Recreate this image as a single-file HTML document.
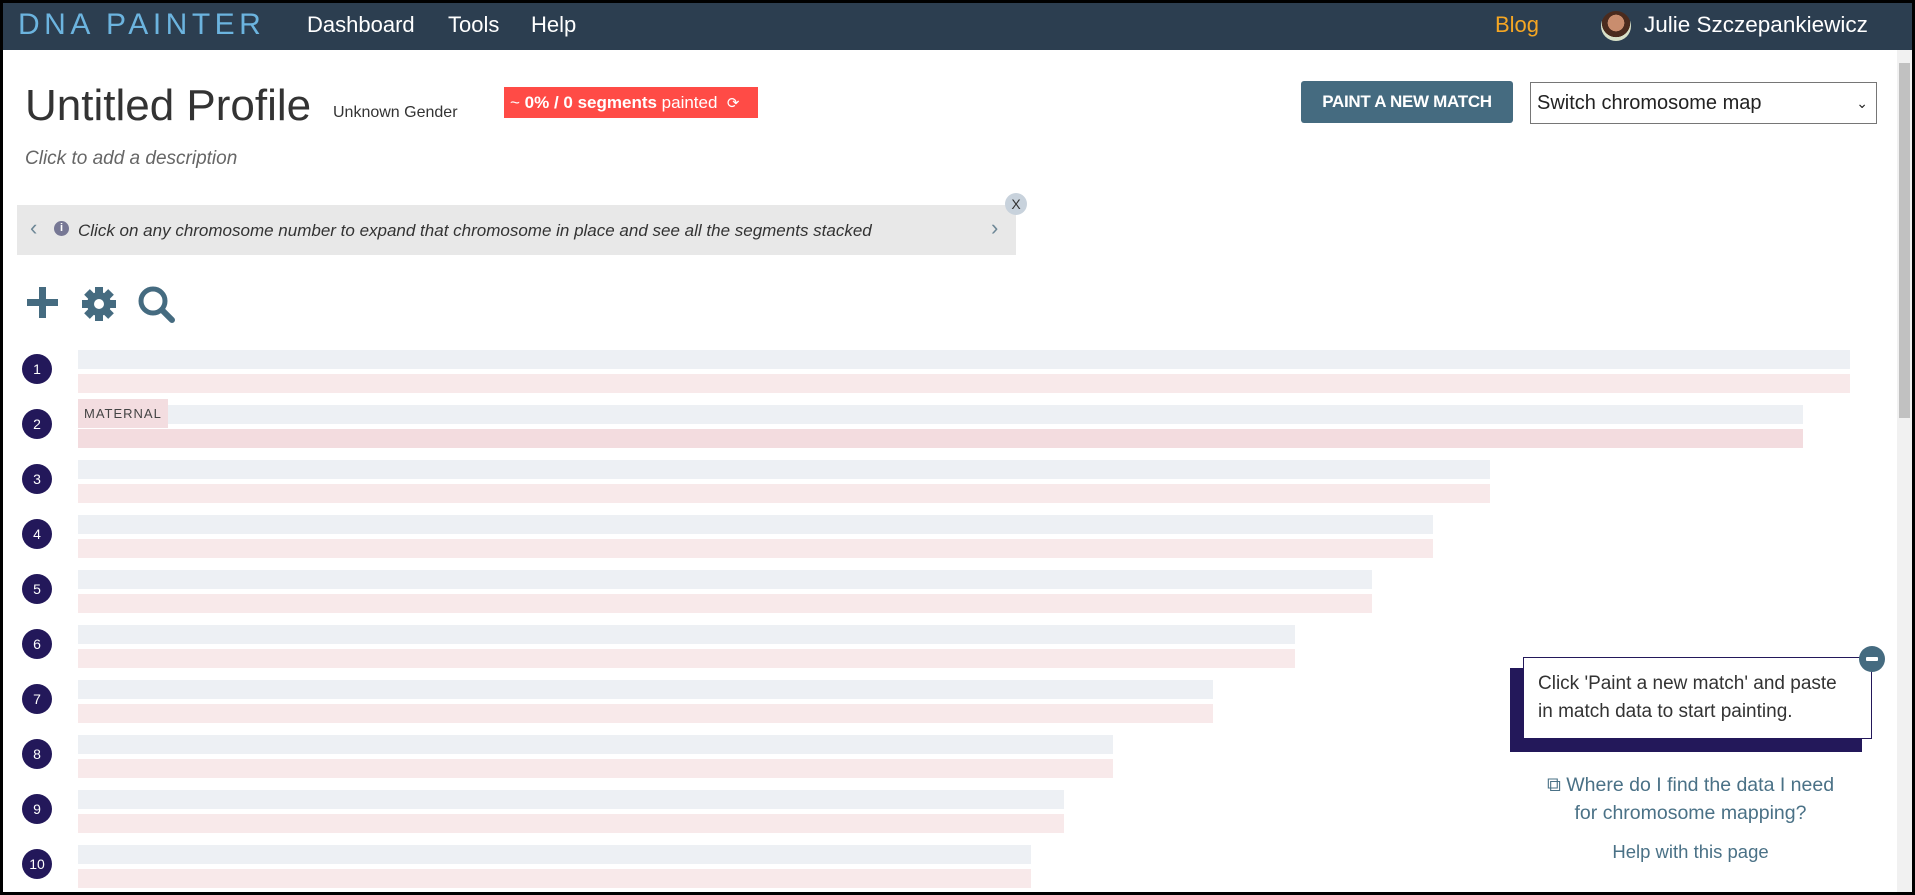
<!DOCTYPE html>
<html><head><meta charset="utf-8"><style>
*{box-sizing:border-box;margin:0;padding:0}
html,body{width:1915px;height:895px;overflow:hidden;background:#000;font-family:"Liberation Sans",Arial,sans-serif}
#page{position:absolute;left:3px;top:3px;width:1909px;height:889px;background:#fff;overflow:hidden}
.abs{position:absolute}
nav{position:absolute;left:0;top:0;width:1909px;height:47px;background:#2c3e50}
.logo{left:15px;top:5px;font-size:30px;color:#6cb4df;letter-spacing:4.5px;font-weight:300}
.nl{top:9px;font-size:22px;color:#fff}
.bar{position:absolute;left:75px;height:19px}
.g{background:#edf0f4}
.p{background:#f8e9ea}
.c{position:absolute;left:19px;width:30px;height:30px;border-radius:50%;background:#23185a;color:#fff;font-size:14px;text-align:center;line-height:30px}
.lk{color:#4a7186;font-size:19px;text-align:center}
</style></head><body><div id="page">
<nav>
<div class="abs logo">DNA PAINTER</div>
<div class="abs nl" style="left:304px">Dashboard</div>
<div class="abs nl" style="left:445px">Tools</div>
<div class="abs nl" style="left:528px">Help</div>
<div class="abs nl" style="left:1492px;color:#f5a623">Blog</div>
<div class="abs" style="left:1598px;top:8px;width:30px;height:30px;border-radius:50%;background:radial-gradient(circle at 50% 40%,#c98d6e 0 35%,#4a2b1e 36% 60%,#d8e0c8 61%)"></div>
<div class="abs nl" style="left:1641px;font-size:22.5px">Julie Szczepankiewicz</div>
</nav>
<div class="abs" style="left:22px;top:78px;font-size:44px;color:#333">Untitled Profile</div>
<div class="abs" style="left:330px;top:101px;font-size:16px;color:#333">Unknown Gender</div>
<div class="abs" style="left:501px;top:84px;width:254px;height:31px;background:#ff4b46;color:#fff;font-size:17px;line-height:31px;padding-left:6px">~ <b>0% / 0 segments</b> painted &nbsp;<span style="font-size:15px">⟳</span></div>
<div class="abs" style="left:22px;top:145px;font-size:19px;color:#666;font-style:italic">Click to add a description</div>
<div class="abs" style="left:1298px;top:78px;width:212px;height:42px;background:#456b80;border-radius:3px;color:#fff;font-weight:bold;font-size:17px;text-align:center;line-height:42px;letter-spacing:-0.3px">PAINT A NEW MATCH</div>
<div class="abs" style="left:1527px;top:79px;width:347px;height:42px;border:1px solid #767676;font-size:20px;line-height:40px;padding-left:6px;color:#222">Switch chromosome map<span style="position:absolute;right:8px;top:0;font-size:14px">&#8964;</span></div>
<div class="abs" style="left:14px;top:202px;width:999px;height:50px;background:#e8e8e8"></div>
<div class="abs" style="left:27px;top:212px;font-size:22px;color:#6d8796">&#8249;</div>
<div class="abs" style="left:51px;top:218px;width:15px;height:15px;border-radius:50%;background:#777895;color:#fff;font-size:11px;text-align:center;line-height:15px;font-weight:bold">i</div>
<div class="abs" style="left:75px;top:218px;font-size:17px;color:#333;font-style:italic">Click on any chromosome number to expand that chromosome in place and see all the segments stacked</div>
<div class="abs" style="left:988px;top:212px;font-size:22px;color:#6d8796">&#8250;</div>
<div class="abs" style="left:1002px;top:190px;width:22px;height:22px;border-radius:50%;background:#c8d2dc;color:#333;font-size:14px;text-align:center;line-height:22px">X</div>
<svg class="abs" style="left:20px;top:280px" width="160" height="45" viewBox="0 0 160 45">
<path d="M16 4h7v12h12v7H23v12h-7V23H4v-7h12z" fill="#456b80"/>
<g transform="translate(76,21)" fill="#456b80"><circle r="12"/><g><rect x="-4" y="-17" width="8" height="34"/><rect x="-4" y="-17" width="8" height="34" transform="rotate(45)"/><rect x="-4" y="-17" width="8" height="34" transform="rotate(90)"/><rect x="-4" y="-17" width="8" height="34" transform="rotate(135)"/></g><circle r="5" fill="#fff"/></g>
<circle cx="130" cy="18" r="12" fill="none" stroke="#456b80" stroke-width="5"/><path d="M139 27l10 10" stroke="#456b80" stroke-width="6" stroke-linecap="round"/>
</svg>
<div class="c" style="top:351px">1</div>
<div class="bar g" style="top:347px;width:1772px"></div><div class="bar p" style="top:371px;width:1772px"></div>
<div class="c" style="top:406px">2</div>
<div class="bar g" style="top:402px;width:1725px"></div><div class="bar p" style="top:426px;width:1725px;background:#f3dcdf"></div>
<div class="abs" style="left:75px;top:396px;width:90px;height:29px;background:#f3dde0;color:#444;font-size:13px;line-height:29px;padding-left:6px;letter-spacing:1px">MATERNAL</div>
<div class="c" style="top:461px">3</div>
<div class="bar g" style="top:457px;width:1412px"></div><div class="bar p" style="top:481px;width:1412px"></div>
<div class="c" style="top:516px">4</div>
<div class="bar g" style="top:512px;width:1355px"></div><div class="bar p" style="top:536px;width:1355px"></div>
<div class="c" style="top:571px">5</div>
<div class="bar g" style="top:567px;width:1294px"></div><div class="bar p" style="top:591px;width:1294px"></div>
<div class="c" style="top:626px">6</div>
<div class="bar g" style="top:622px;width:1217px"></div><div class="bar p" style="top:646px;width:1217px"></div>
<div class="c" style="top:681px">7</div>
<div class="bar g" style="top:677px;width:1135px"></div><div class="bar p" style="top:701px;width:1135px"></div>
<div class="c" style="top:736px">8</div>
<div class="bar g" style="top:732px;width:1035px"></div><div class="bar p" style="top:756px;width:1035px"></div>
<div class="c" style="top:791px">9</div>
<div class="bar g" style="top:787px;width:986px"></div><div class="bar p" style="top:811px;width:986px"></div>
<div class="c" style="top:846px">10</div>
<div class="bar g" style="top:842px;width:953px"></div><div class="bar p" style="top:866px;width:953px"></div>
<div class="abs" style="left:1507px;top:665px;width:352px;height:84px;background:#23185a"></div>
<div class="abs" style="left:1520px;top:654px;width:349px;height:82px;background:#fff;border:1px solid #23185a;font-size:19px;color:#333;line-height:28px;padding:12px 0 0 14px">Click 'Paint a new match' and paste<br>in match data to start painting.</div>
<div class="abs" style="left:1856px;top:643px;width:26px;height:26px;border-radius:50%;background:#456b80"><div style="position:absolute;left:7px;top:11px;width:12px;height:4px;background:#fff;border-radius:1px"></div></div>
<div class="abs lk" style="left:1500px;top:768px;width:375px;line-height:28px;font-size:19.5px">&#10697; Where do I find the data I need<br>for chromosome mapping?</div>
<div class="abs lk" style="left:1500px;top:838px;width:375px;font-size:18.5px">Help with this page</div>
<div class="abs" style="left:1894px;top:47px;width:15px;height:842px;background:#f1f1f1"></div>
<div class="abs" style="left:1896px;top:60px;width:11px;height:355px;background:#c1c1c1"></div>
</div></body></html>
